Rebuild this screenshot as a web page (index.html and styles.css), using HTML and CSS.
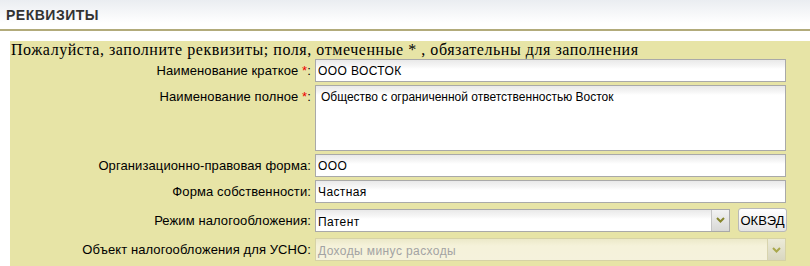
FILE: index.html
```html
<!DOCTYPE html>
<html lang="ru">
<head>
<meta charset="utf-8">
<title>Реквизиты</title>
<link rel="stylesheet" href="styles.css">
</head>
<body>
<div class="header">РЕКВИЗИТЫ</div>
<div class="panel">
  <div class="intro">Пожалуйста, заполните реквизиты; поля, отмеченные * , обязательны для заполнения</div>
  <div class="row r1">
    <label class="label">Наименование краткое <span class="req">*</span>:</label>
    <input class="field" type="text" value="ООО ВОСТОК">
  </div>
  <div class="row r2 top">
    <label class="label lab-top">Наименование полное <span class="req">*</span>:</label>
    <textarea class="field area">Общество с ограниченной ответственностью Восток</textarea>
  </div>
  <div class="row r3">
    <label class="label">Организационно-правовая форма:</label>
    <input class="field" type="text" value="ООО">
  </div>
  <div class="row r4">
    <label class="label">Форма собственности:</label>
    <input class="field" type="text" value="Частная">
  </div>
  <div class="row r5">
    <label class="label">Режим налогообложения:</label>
    <div class="combo short">
      <span class="combo-text">Патент</span>
      <span class="combo-btn"><svg width="9" height="6" viewBox="0 0 9 6"><path d="M1 1 L4.5 4.5 L8 1" fill="none" stroke="#87862c" stroke-width="2"/></svg></span>
    </div>
    <button class="okved">ОКВЭД</button>
  </div>
  <div class="row r6">
    <label class="label">Объект налогообложения для УСНО:</label>
    <div class="combo disabled">
      <span class="combo-text">Доходы минус расходы</span>
      <span class="combo-btn"><svg width="9" height="6" viewBox="0 0 9 6"><path d="M1 1 L4.5 4.5 L8 1" fill="none" stroke="#a9a84c" stroke-width="2"/></svg></span>
    </div>
  </div>
</div>
</body>
</html>
```
FILE: styles.css
```css
html, body {
  margin: 0;
  padding: 0;
  background: #ffffff;
  overflow: hidden;
}
body {
  font-family: "Liberation Sans", Arial, sans-serif;
  font-size: 13px;
  color: #000;
}
.header {
  height: 29px;
  line-height: 30px;
  padding-left: 6px;
  font-weight: bold;
  font-size: 14px;
  letter-spacing: 0.5px;
  color: #333333;
  background: linear-gradient(#eaedf1, #ffffff 80%);
  border-bottom: 2px solid #b2ab7b;
}
.panel {
  margin: 10px 0 0 10px;
  background: #e7e4a6;
  padding: 1px 0 8px 0;
}
.intro {
  font-family: "Liberation Serif", "Times New Roman", serif;
  font-size: 16px;
  letter-spacing: 0.55px;
  line-height: 16px;
  padding-left: 1px;
  white-space: nowrap;
}
.row {
  display: flex;
  align-items: center;
}
.row.top {
  align-items: flex-start;
}
.r1 { margin-top: 1px; }
.r2 { margin-top: 3px; }
.r3 { margin-top: 3px; }
.r4 { margin-top: 3px; }
.r5 { margin-top: 5px; }
.r6 { margin-top: 6px; }
.label {
  width: 305px;
  box-sizing: border-box;
  padding-right: 4px;
  text-align: right;
  white-space: nowrap;
  letter-spacing: 0.1px;
}
.lab-top {
  padding-top: 4px;
}
.req {
  color: #ee0000;
}
.field {
  width: 471px;
  height: 23px;
  box-sizing: border-box;
  margin: 0;
  border: 1px solid #a9a9a9;
  padding: 0 2px;
  font-family: "Liberation Sans", Arial, sans-serif;
  font-size: 12px;
  letter-spacing: 0.4px;
  color: #000;
  background: linear-gradient(#e9e9e9, #f6f6f6 6px, #ffffff 9px);
  outline: none;
}
.area {
  height: 66px;
  padding: 4px 5px;
  resize: none;
  line-height: 14px;
  overflow: hidden;
  letter-spacing: 0;
}
.combo {
  display: flex;
  align-items: stretch;
  height: 23px;
  width: 471px;
  box-sizing: border-box;
  border: 1px solid #a9a9a9;
  background: linear-gradient(#e9e9e9, #f6f6f6 6px, #ffffff 9px);
  font-size: 12px;
  letter-spacing: 0.4px;
}
.combo.short {
  width: 415px;
}
.combo-text {
  flex: 1;
  padding: 5px 2px 0 2px;
  line-height: 14px;
}
.combo-btn {
  width: 17px;
  border-left: 1px solid #c4c4c4;
  background: linear-gradient(#f2f2f2, #d8d8d6);
  display: flex;
  align-items: center;
  justify-content: center;
}
.combo.disabled {
  border-color: #d6d2a6;
  background: linear-gradient(#ece9c9, #f5f2da 7px, #f5f2dc);
  color: #a3a3a3;
}
.combo.disabled .combo-btn {
  border-left-color: #d8d4ae;
  background: linear-gradient(#ecebd8, #d9d7c0);
}
.okved {
  margin-left: 8px;
  width: 49px;
  height: 24px;
  box-sizing: border-box;
  padding: 0;
  border: 1px solid #b9b9b9;
  border-radius: 3px;
  background: linear-gradient(#ffffff, #f4f4f4 50%, #e4e4e4);
  font-family: "Liberation Sans", Arial, sans-serif;
  font-size: 13px;
  color: #000;
}
```
